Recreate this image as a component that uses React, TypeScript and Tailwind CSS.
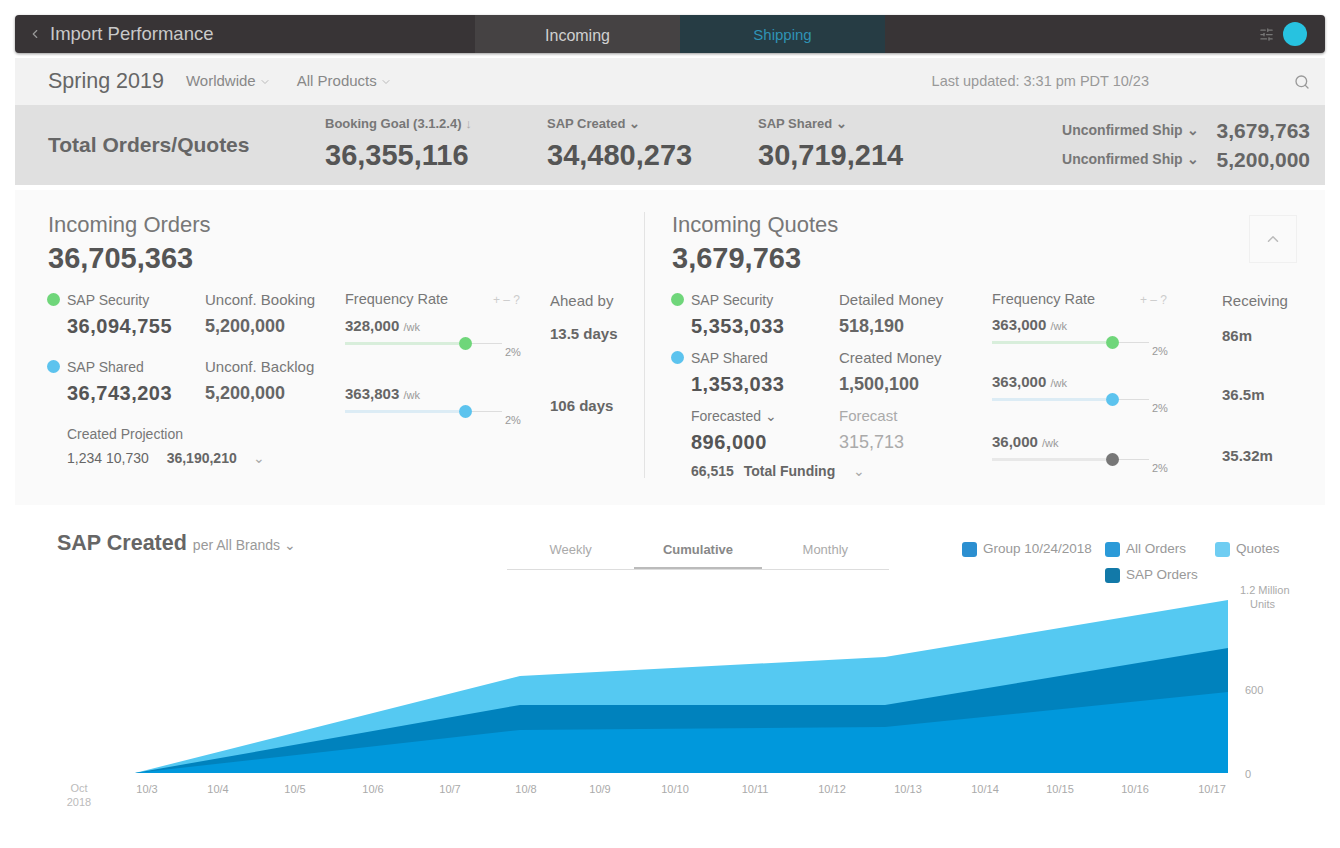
import { ChevronDown, ChevronLeft, ChevronUp, Search, SlidersHorizontal } from "lucide-react";

const font = "font-['Liberation_Sans',Arial,sans-serif]";

function Stat({ dot, label, value }: { dot?: string; label: string; value: string }) {
  return (
    <div className="relative">
      {dot && <span className={`absolute -left-[20px] top-[3px] h-[13px] w-[13px] rounded-full ${dot}`} />}
      <p className="h-[20px] text-[14px] leading-[20px] text-[#777]">{label}</p>
      <p className="mt-[4px] h-[24px] text-[20px] font-bold leading-[24px] tracking-[0.5px] text-[#555]">{value}</p>
    </div>
  );
}

function Plain({ label, value, light }: { label: string; value: string; light?: boolean }) {
  return (
    <div>
      <p className={`h-[20px] text-[15px] leading-[20px] ${light ? "text-[#aaa]" : "text-[#777]"}`}>{label}</p>
      <p className={`mt-[4px] h-[24px] text-[18px] leading-[24px] ${light ? "text-[#aaa]" : "font-bold text-[#666]"}`}>{value}</p>
    </div>
  );
}

function Rate({ value, dot, track, delta }: { value: string; dot: string; track: string; delta: string }) {
  return (
    <div className="w-[180px]">
      <p className="text-[15px] font-bold leading-[20px] text-[#666]">
        {value} <span className="text-[11px] font-normal text-[#999]">/wk</span>
      </p>
      <div className="flex items-center">
        <div className={`h-[3px] w-[114px] ${track}`} />
        <span className={`h-[13px] w-[13px] rounded-full ${dot}`} />
        <div className="h-px w-[30px] bg-[#ddd]" />
      </div>
      <p className="-mt-[5px] pl-[160px] text-[11px] leading-[14px] text-[#999]">{delta}</p>
    </div>
  );
}

function RateHead({ label }: { label: string }) {
  return (
    <div className="flex h-[20px] w-[175px] items-center justify-between">
      <span className="text-[14.5px] text-[#777]">{label}</span>
      <span className="text-[12px] text-[#ccc]">+ – ?</span>
    </div>
  );
}

function Legend({ color, label, className = "" }: { color: string; label: string; className?: string }) {
  return (
    <span className={`flex h-[16px] items-center gap-[6px] whitespace-nowrap text-[13.5px] text-[#999] ${className}`}>
      <span className={`h-[15px] w-[15px] shrink-0 rounded-[3px] ${color}`} />
      {label}
    </span>
  );
}

const ticks = [147, 218, 295, 373, 450, 526, 600, 675, 755, 832, 908, 985, 1060, 1135, 1212];
const tickLabels = ["10/3", "10/4", "10/5", "10/6", "10/7", "10/8", "10/9", "10/10", "10/11", "10/12", "10/13", "10/14", "10/15", "10/16", "10/17"];

export default function App() {
  return (
    <div className={`h-[848px] w-[1340px] overflow-hidden bg-white px-[15px] pt-[15px] ${font}`}>
      {/* Top bar */}
      <header className="flex h-[38px] items-center rounded-[4px] bg-[#383436] pl-[13px] pr-[18px] shadow-[0_1px_3px_rgba(0,0,0,0.4)]">
        <ChevronLeft className="h-[14px] w-[14px] text-[#999]" />
        <span className="ml-[8px] w-[425px] text-[18.5px] text-[#c9c9c9]">Import Performance</span>
        <div className="flex h-full w-[205px] items-center justify-center bg-[#454243] pt-[3px] text-[16px] text-[#d0d0d0]">Incoming</div>
        <div className="flex h-full w-[205px] items-center justify-center bg-[#263c44] pt-[3px] text-[15px] text-[#2f93b5]">Shipping</div>
        <div className="flex-1" />
        <SlidersHorizontal className="mr-[9px] h-[15px] w-[15px] text-[#777]" />
        <span className="h-[24px] w-[24px] rounded-full bg-[#27c2e0]" />
      </header>

      {/* Filters */}
      <div className="mt-[5px] flex h-[47px] items-center bg-[#f2f2f2] pl-[33px] pr-[15px] text-[#888]">
        <span className="text-[21.5px] text-[#666]">Spring 2019</span>
        <span className="ml-[22px] flex items-center gap-[3px] text-[15px]">
          Worldwide <ChevronDown className="h-[12px] w-[12px] text-[#bbb]" />
        </span>
        <span className="ml-[26px] flex items-center gap-[3px] text-[15px]">
          All Products <ChevronDown className="h-[12px] w-[12px] text-[#bbb]" />
        </span>
        <span className="ml-auto mr-[145px] text-[14.5px] text-[#999]">Last updated: 3:31 pm PDT 10/23</span>
        <Search className="h-[16px] w-[16px] text-[#999]" />
      </div>

      {/* Totals */}
      <div className="flex h-[80px] items-center bg-[#e0e0e0] pl-[33px] pr-[15px]">
        <span className="w-[277px] text-[21px] font-bold text-[#666]">Total Orders/Quotes</span>
        <div className="mb-[4px] w-[222px]">
          <p className="text-[13px] font-bold leading-[18px] text-[#777]">Booking Goal (3.1.2.4) <span className="font-normal text-[#aaa]">↓</span></p>
          <p className="mt-[6px] text-[29px] font-bold leading-[32px] text-[#555]">36,355,116</p>
        </div>
        <div className="mb-[4px] w-[211px]">
          <p className="text-[13px] font-bold leading-[18px] text-[#777]">SAP Created ⌄</p>
          <p className="mt-[6px] text-[29px] font-bold leading-[32px] text-[#555]">34,480,273</p>
        </div>
        <div className="mb-[4px] w-[200px]">
          <p className="text-[13px] font-bold leading-[18px] text-[#777]">SAP Shared ⌄</p>
          <p className="mt-[6px] text-[29px] font-bold leading-[32px] text-[#555]">30,719,214</p>
        </div>
        <div className="ml-auto grid grid-cols-[auto_auto] items-center gap-x-[18px] gap-y-[5px] text-right">
          <span className="text-[14px] font-bold text-[#777]">Unconfirmed Ship ⌄</span>
          <span className="text-[21px] font-bold leading-[24px] text-[#666]">3,679,763</span>
          <span className="text-[14px] font-bold text-[#777]">Unconfirmed Ship ⌄</span>
          <span className="text-[21px] font-bold leading-[24px] text-[#666]">5,200,000</span>
        </div>
      </div>

      {/* Incoming panel */}
      <section className="mt-[5px] flex h-[315px] bg-[#fafafa] pt-[22px]">
        {/* Orders */}
        <div className="mb-[27px] w-[630px] border-r border-[#e3e3e3] pl-[33px]">
          <h2 className="text-[22px] leading-[26px] text-[#777]">Incoming Orders</h2>
          <p className="mt-[2px] text-[29px] font-bold leading-[36px] text-[#555]">36,705,363</p>
          <div className="mt-[14px] flex">
            <div className="flex w-[157px] flex-col gap-[19px] pl-[19px]">
              <Stat dot="bg-[#6fd67a]" label="SAP Security" value="36,094,755" />
              <Stat dot="bg-[#5cc3ee]" label="SAP Shared" value="36,743,203" />
              <div>
                <p className="h-[20px] text-[14px] leading-[20px] text-[#777]">Created Projection</p>
                <p className="mt-[4px] whitespace-nowrap text-[14px] leading-[20px] text-[#666]">
                  1,234 10,730 <span className="ml-[14px] font-bold">36,190,210</span> <span className="ml-[12px] text-[#aaa]">⌄</span>
                </p>
              </div>
            </div>
            <div className="flex w-[140px] flex-col gap-[19px]">
              <Plain label="Unconf. Booking" value="5,200,000" />
              <Plain label="Unconf. Backlog" value="5,200,000" />
            </div>
            <div className="flex w-[205px] flex-col">
              <RateHead label="Frequency Rate" />
              <div className="mt-[6px]"><Rate value="328,000" dot="bg-[#6fd67a]" track="bg-[#d8eedb]" delta="2%" /></div>
              <div className="mt-[25px]"><Rate value="363,803" dot="bg-[#5cc3ee]" track="bg-[#dcecf5]" delta="2%" /></div>
            </div>
            <div className="flex flex-col text-[15px] text-[#777]">
              <span className="h-[20px]">Ahead by</span>
              <span className="mt-[13px] font-bold text-[#666]">13.5 days</span>
              <span className="mt-[49px] font-bold text-[#666]">106 days</span>
            </div>
          </div>
        </div>

        {/* Quotes */}
        <div className="relative flex-1 pl-[27px]">
          <button className="absolute right-[28px] top-[3px] flex h-[48px] w-[48px] items-center justify-center border border-[#f0f0f0] text-[#bbb]">
            <ChevronUp className="h-[18px] w-[18px]" />
          </button>
          <h2 className="text-[22px] leading-[26px] text-[#777]">Incoming Quotes</h2>
          <p className="mt-[2px] text-[29px] font-bold leading-[36px] text-[#555]">3,679,763</p>
          <div className="mt-[14px] flex">
            <div className="flex w-[167px] flex-col gap-[10px] pl-[19px]">
              <Stat dot="bg-[#6fd67a]" label="SAP Security" value="5,353,033" />
              <Stat dot="bg-[#5cc3ee]" label="SAP Shared" value="1,353,033" />
              <Stat label="Forecasted ⌄" value="896,000" />
              <p className="-mt-[3px] whitespace-nowrap text-[14px] font-bold text-[#666]">
                66,515 <span className="ml-[6px]">Total Funding</span> <span className="ml-[14px] font-normal text-[#aaa]">⌄</span>
              </p>
            </div>
            <div className="flex w-[153px] flex-col gap-[10px]">
              <Plain label="Detailed Money" value="518,190" />
              <Plain label="Created Money" value="1,500,100" />
              <Plain label="Forecast" value="315,713" light />
            </div>
            <div className="flex w-[230px] flex-col">
              <RateHead label="Frequency Rate" />
              <div className="mt-[5px]"><Rate value="363,000" dot="bg-[#6fd67a]" track="bg-[#d8eedb]" delta="2%" /></div>
              <div className="mt-[14px]"><Rate value="363,000" dot="bg-[#5cc3ee]" track="bg-[#dcecf5]" delta="2%" /></div>
              <div className="mt-[17px]"><Rate value="36,000" dot="bg-[#777]" track="bg-[#e8e8e8]" delta="2%" /></div>
            </div>
            <div className="flex flex-col text-[15px] font-bold text-[#666]">
              <span className="h-[20px] font-normal text-[#777]">Receiving</span>
              <span className="mt-[15px]">86m</span>
              <span className="mt-[36px]">36.5m</span>
              <span className="mt-[39px]">35.32m</span>
            </div>
          </div>
        </div>
      </section>

      {/* Chart header */}
      <div className="flex items-start pl-[42px] pr-[40px] pt-[25px]">
        <div className="flex w-[450px] items-baseline gap-[6px]">
          <span className="text-[21.5px] font-bold leading-[26px] text-[#666]">SAP Created</span>
          <span className="text-[14px] text-[#999]">per All Brands ⌄</span>
        </div>
        <div className="flex w-[382px] border-b border-[#ddd] text-center text-[13px] text-[#aaa]">
          <span className="flex-1 pb-[7px] pt-[10px]">Weekly</span>
          <span className="flex-1 border-b-2 border-[#bbb] pb-[7px] pt-[10px] font-bold text-[#888]">Cumulative</span>
          <span className="flex-1 pb-[7px] pt-[10px]">Monthly</span>
        </div>
        <div className="ml-auto grid grid-cols-[133px_100px_70px] gap-x-[10px] gap-y-[10px] pt-[11px]">
          <Legend color="bg-[#2c8fd0]" label="Group 10/24/2018" />
          <Legend color="bg-[#2b9ad8]" label="All Orders" />
          <Legend color="bg-[#6fcdf2]" label="Quotes" />
          <Legend color="bg-[#1279a8]" label="SAP Orders" className="col-start-2" />
        </div>
      </div>

      {/* Area chart */}
      <svg className="-ml-[15px] -mt-[13px] block" width="1340" height="260" viewBox="0 570 1340 260">
        <polygon points="135,773 520,676 885,657 1228,600 1228,773" fill="#55c9f2" />
        <polygon points="135,773 520,705 885,705 1228,648 1228,773" fill="#0082bd" />
        <polygon points="135,773 520,730 885,727 1228,692 1228,773" fill="#0098dc" />
        {ticks.map((x, i) => (
          <text key={x} x={x} y={793} fontSize="11" textAnchor="middle" fill="#aaa">{tickLabels[i]}</text>
        ))}
        <text x="79" y="792" fontSize="11" textAnchor="middle" fill="#bbb">Oct</text>
        <text x="79" y="806" fontSize="11" textAnchor="middle" fill="#bbb">2018</text>
        <text x="1240" y="594" fontSize="11" fill="#aaa">1.2 Million</text>
        <text x="1250" y="608" fontSize="11" fill="#aaa">Units</text>
        <text x="1245" y="694" fontSize="11" fill="#aaa">600</text>
        <text x="1245" y="778" fontSize="11" fill="#aaa">0</text>
      </svg>
    </div>
  );
}
